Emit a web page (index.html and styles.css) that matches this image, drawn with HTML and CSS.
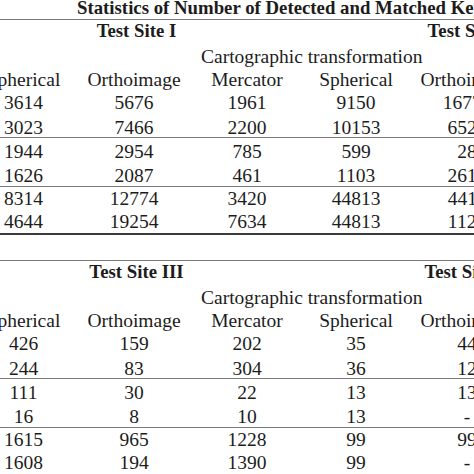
FILE: index.html
```html
<!DOCTYPE html>
<html lang="en">
<head>
<meta charset="utf-8">
<title>Statistics of Number of Detected and Matched Keypoints</title>
<link rel="stylesheet" href="styles.css">
</head>
<body>
<div class="page">
  <div class="sheet">
    <section class="block">
      <div class="title">Statistics of Number of Detected and Matched Keypoints</div>
      <div class="rule"></div>
      <div class="row site"><div class="span-ac">Test Site I</div><div class="col-e next">Test Site II</div></div>
      <div class="row cart"><div class="span-cd">Cartographic transformation</div></div>
      <div class="row head"><div>Spherical</div><div>Orthoimage</div><div>Mercator</div><div>Spherical</div><div>Orthoimage</div></div>
      <div class="row d1"><div>3614</div><div>5676</div><div>1961</div><div>9150</div><div>16772</div></div>
      <div class="row d2"><div>3023</div><div>7466</div><div>2200</div><div>10153</div><div>6524</div></div>
      <div class="rule"></div>
      <div class="row d3"><div>1944</div><div>2954</div><div>785</div><div>599</div><div>28</div></div>
      <div class="row d4"><div>1626</div><div>2087</div><div>461</div><div>1103</div><div>2613</div></div>
      <div class="rule"></div>
      <div class="row d5"><div>8314</div><div>12774</div><div>3420</div><div>44813</div><div>4411</div></div>
      <div class="row d6"><div>4644</div><div>19254</div><div>7634</div><div>44813</div><div>1129</div></div>
      <div class="rule rule-bottom"></div>
    </section>
    <section class="block block-next">
      <div class="rule"></div>
      <div class="row site"><div class="span-ac">Test Site III</div><div class="col-e next">Test Site IV</div></div>
      <div class="row cart"><div class="span-cd">Cartographic transformation</div></div>
      <div class="row head"><div>Spherical</div><div>Orthoimage</div><div>Mercator</div><div>Spherical</div><div>Orthoimage</div></div>
      <div class="row d1"><div>426</div><div>159</div><div>202</div><div>35</div><div>44</div></div>
      <div class="row d2"><div>244</div><div>83</div><div>304</div><div>36</div><div>12</div></div>
      <div class="rule"></div>
      <div class="row d3"><div>111</div><div>30</div><div>22</div><div>13</div><div>13</div></div>
      <div class="row d4"><div>16</div><div>8</div><div>10</div><div>13</div><div>-</div></div>
      <div class="rule"></div>
      <div class="row d5"><div>1615</div><div>965</div><div>1228</div><div>99</div><div>99</div></div>
      <div class="row d6"><div>1608</div><div>194</div><div>1390</div><div>99</div><div>-</div></div>
    </section>
  </div>
</div>
</body>
</html>
```
FILE: styles.css
```css
html, body {
  margin: 0;
  padding: 0;
  background: #ffffff;
}

.page {
  width: 474px;
  height: 474px;
  overflow: hidden;
  font-family: "Liberation Serif", "Times New Roman", serif;
  font-size: 19.5px;
  color: #1c1c1c;
}

.sheet {
  width: 559px;
  margin-left: -32px;
}

.title {
  margin-top: -4px;
  height: 23px;
  line-height: 23px;
  padding-left: 109px;
  font-weight: bold;
  font-size: 18.8px;
  white-space: nowrap;
}

.rule {
  height: 1px;
  background: #7a7a7a;
}

.rule-bottom {
  height: 2px;
  background: #3a3a3a;
}

.block-next {
  margin-top: 25px;
}

.row {
  display: grid;
  grid-template-columns: 111px 110px 116px 102px 120px;
  text-align: center;
  white-space: nowrap;
}

.span-ac { grid-column: 1 / 4; }
.span-cd { grid-column: 3 / 5; padding-left: 12px; }
.col-e { grid-column: 5; }
.next { padding-left: 8px; }

.site {
  height: 22px;
  line-height: 22px;
  font-weight: bold;
  font-size: 18.8px;
}
.cart { height: 29px; line-height: 29px; }
.head { height: 17px; line-height: 17px; }
.d1 { height: 30px; line-height: 30px; }
.d2 { height: 19px; line-height: 19px; }
.d3 { height: 28px; line-height: 28px; }
.d4 { height: 20px; line-height: 20px; }
.d5 { height: 24px; line-height: 24px; }
.d6 { height: 22px; line-height: 22px; }
```
